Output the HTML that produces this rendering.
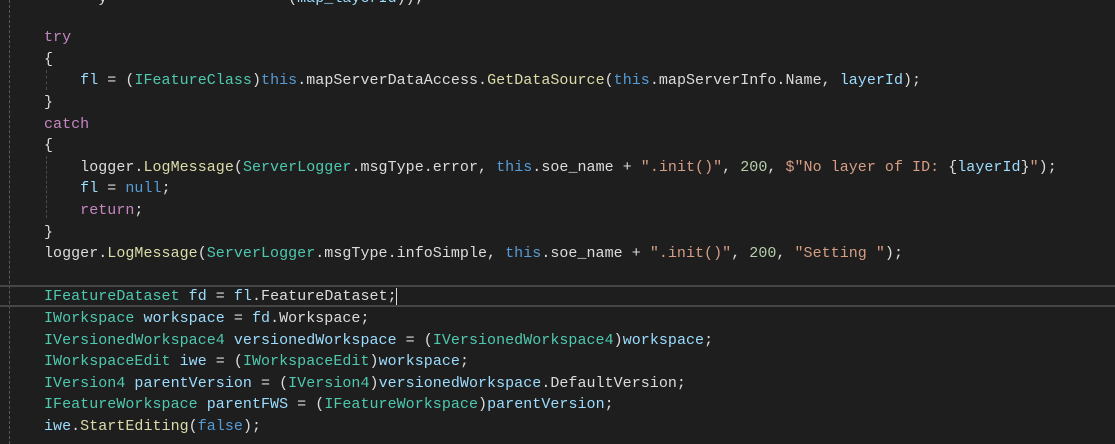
<!DOCTYPE html>
<html><head><meta charset="utf-8"><style>
html,body{margin:0;padding:0;background:#1e1e1e;width:1115px;height:444px;overflow:hidden}
#c{position:absolute;left:0;top:-16px;width:1115px;font-family:"Liberation Mono","DejaVu Sans Mono",monospace;font-size:15px;letter-spacing:0.04px;color:#dcdcdc}
.l{height:21.6px;line-height:21.6px;white-space:pre;padding-left:44px;position:relative}
.k{color:#c586c0}.b{color:#569cd6}.t{color:#4ec9b0}.v{color:#9cdcfe}.m{color:#dcdcaa}.s{color:#d69d85}.n{color:#b5cea8}
.g{position:absolute;left:9px;top:0;width:0;height:444px;border-left:1px dashed #5a5a5a}
.ig{position:absolute;left:46px;width:0;border-left:1px dashed #4a4a4a}
.cur{position:absolute;left:0;top:285.4px;width:1115px;height:18px;border:2px solid #464646;border-left:none;border-right:none;box-sizing:content-box}
.caret{position:absolute;left:396px;top:288px;width:1px;height:17px;background:#dcdcdc}
</style></head><body>
<div class="g"></div>
<div class="ig" style="top:70px;height:20px"></div>
<div class="ig" style="top:156px;height:62px"></div>
<div class="cur"></div>
<div class="caret"></div>
<div id="c">
<div class="l" style="top:4px">      y                    (<span class="v">map_layerId</span>));</div>
<div class="l"> </div>
<div class="l"><span class="k">try</span></div>
<div class="l">{</div>
<div class="l">    <span class="v">fl</span> = (<span class="t">IFeatureClass</span>)<span class="b">this</span>.mapServerDataAccess.<span class="m">GetDataSource</span>(<span class="b">this</span>.mapServerInfo.Name, <span class="v">layerId</span>);</div>
<div class="l">}</div>
<div class="l"><span class="k">catch</span></div>
<div class="l">{</div>
<div class="l">    logger.<span class="m">LogMessage</span>(<span class="t">ServerLogger</span>.msgType.error, <span class="b">this</span>.soe_name + <span class="s">".init()"</span>, <span class="n">200</span>, <span class="s">$"No layer of ID: </span>{<span class="v">layerId</span>}<span class="s">"</span>);</div>
<div class="l">    <span class="v">fl</span> = <span class="b">null</span>;</div>
<div class="l">    <span class="k">return</span>;</div>
<div class="l">}</div>
<div class="l">logger.<span class="m">LogMessage</span>(<span class="t">ServerLogger</span>.msgType.infoSimple, <span class="b">this</span>.soe_name + <span class="s">".init()"</span>, <span class="n">200</span>, <span class="s">"Setting "</span>);</div>
<div class="l"> </div>
<div class="l"><span class="t">IFeatureDataset</span> <span class="v">fd</span> = <span class="v">fl</span>.FeatureDataset;</div>
<div class="l"><span class="t">IWorkspace</span> <span class="v">workspace</span> = <span class="v">fd</span>.Workspace;</div>
<div class="l"><span class="t">IVersionedWorkspace4</span> <span class="v">versionedWorkspace</span> = (<span class="t">IVersionedWorkspace4</span>)<span class="v">workspace</span>;</div>
<div class="l"><span class="t">IWorkspaceEdit</span> <span class="v">iwe</span> = (<span class="t">IWorkspaceEdit</span>)<span class="v">workspace</span>;</div>
<div class="l"><span class="t">IVersion4</span> <span class="v">parentVersion</span> = (<span class="t">IVersion4</span>)<span class="v">versionedWorkspace</span>.DefaultVersion;</div>
<div class="l"><span class="t">IFeatureWorkspace</span> <span class="v">parentFWS</span> = (<span class="t">IFeatureWorkspace</span>)<span class="v">parentVersion</span>;</div>
<div class="l"><span class="v">iwe</span>.<span class="m">StartEditing</span>(<span class="b">false</span>);</div>
</div>
</body></html>
